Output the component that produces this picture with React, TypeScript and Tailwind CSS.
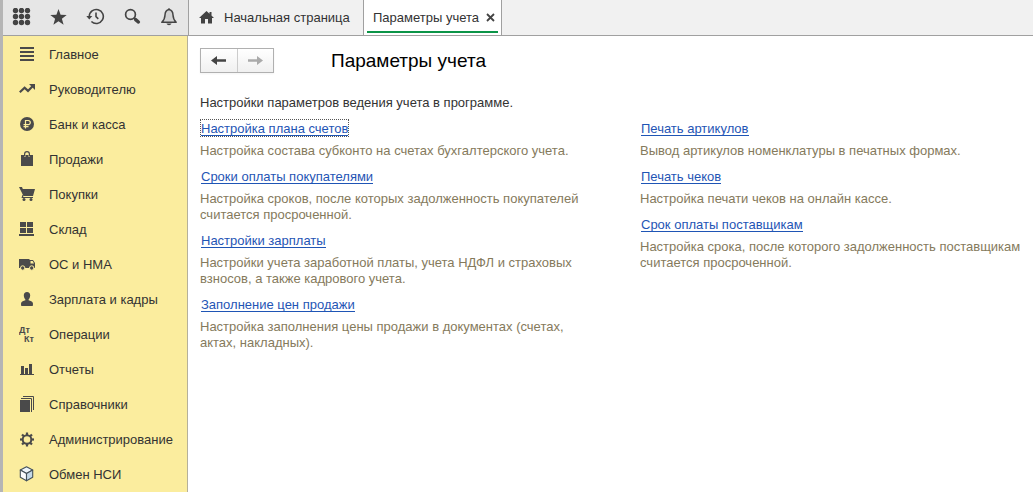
import React from "react";

interface IconProps {
  children: React.ReactNode;
  size?: number;
}

const Icon = ({ children, size = 17 }: IconProps) => (
  <svg
    width={size}
    height={size}
    viewBox={`0 0 ${size} ${size}`}
    fill="currentColor"
    className="shrink-0"
    aria-hidden="true"
  >
    {children}
  </svg>
);

const tools = [
  {
    label: "Меню функций",
    icon: (
      <>
        {[3.5, 9.5, 15.5].map((x) =>
          [2.5, 8.5, 14.5].map((y) => (
            <circle key={`${x}-${y}`} cx={x} cy={y} r="2.7" />
          ))
        )}
      </>
    ),
  },
  {
    label: "Избранное",
    icon: (
      <path d="M9.5 1l2.1 5.8 6.1.2-4.8 3.8 1.7 5.9-5.1-3.4-5.1 3.4 1.7-5.9L1.3 7l6.1-.2z" />
    ),
  },
  {
    label: "История",
    icon: (
      <>
        <path
          d="M3.3 8.5a7 7 0 1 1 2.1 5"
          fill="none"
          stroke="currentColor"
          strokeWidth="1.6"
        />
        <path d="M.3 8h6L3.3 11.6z" />
        <path
          d="M10 4.5v4.2l2.3 2.1"
          fill="none"
          stroke="currentColor"
          strokeWidth="1.6"
        />
      </>
    ),
  },
  {
    label: "Поиск",
    icon: (
      <>
        <circle
          cx="7.5"
          cy="6.5"
          r="4.9"
          fill="none"
          stroke="currentColor"
          strokeWidth="1.7"
        />
        <path d="M11 9.5l2 2" stroke="currentColor" strokeWidth="1.6" />
        <path
          d="M12.6 11.6l2.8 2.4"
          stroke="currentColor"
          strokeWidth="3.4"
          strokeLinecap="round"
        />
      </>
    ),
  },
  {
    label: "Уведомления",
    icon: (
      <>
        <path
          d="M9 1.5c-3 .6-3.9 2.9-4 5.5-.1 3.2-1 5.3-3.2 7.2h14.4C14 12.3 13.1 10.2 13 7c-.1-2.6-1-4.9-4-5.5z"
          fill="#d2d2d2"
          stroke="currentColor"
          strokeWidth="1.5"
          strokeLinejoin="round"
        />
        <path d="M8 .4h2v1.5H8zM6.5 15.5h5c-.5 1.2-1.4 1.7-2.5 1.7s-2-.5-2.5-1.7z" />
      </>
    ),
  },
];

const sections = [
  {
    title: "Главное",
    icon: <path d="M1 1h14v2H1zM1 5h14v2H1zM1 9h14v2H1zM1 13h14v2H1z" />,
  },
  {
    title: "Руководителю",
    icon: (
      <>
        <path
          d="M.8 11.3l4.8-4.6L9 9.9 13.8 5"
          fill="none"
          stroke="currentColor"
          strokeWidth="2.2"
        />
        <path d="M10 3h6v6z" />
      </>
    ),
  },
  {
    title: "Банк и касса",
    icon: (
      <>
        <circle cx="8" cy="8" r="7" />
        <path
          d="M6.5 12.5v-8h2.7a2.1 2.1 0 0 1 0 4.2H4.5M4.5 10.7h5"
          fill="none"
          stroke="#fbed9e"
          strokeWidth="1.2"
        />
      </>
    ),
  },
  {
    title: "Продажи",
    icon: (
      <>
        <path d="M2 4h3v2h1.5V4h3v2H11V4h3v11H2z" />
        <path
          d="M5.6 5.5V3a2.4 2.4 0 0 1 4.8 0v2.5"
          fill="none"
          stroke="currentColor"
          strokeWidth="1.2"
        />
      </>
    ),
  },
  {
    title: "Покупки",
    icon: (
      <>
        <path d="M0 1h3l.8 2H16l-2 7H4.5z" />
        <path
          d="M4 9l-.7 2.5H14"
          fill="none"
          stroke="currentColor"
          strokeWidth="1.2"
        />
        <circle cx="5" cy="13.5" r="1.5" />
        <circle cx="12" cy="13.5" r="1.5" />
      </>
    ),
  },
  {
    title: "Склад",
    icon: (
      <path d="M1 1h6v5H1zM8 1h6v5H8zM1 7h6v5H1zM8 7h6v5H8zM0 13h15v2H0z" />
    ),
  },
  {
    title: "ОС и НМА",
    icon: (
      <>
        <path d="M0 3h10.5v1H14l2 3v5H0z" />
        <path d="M11.5 5h2.2L15 7.5h-3.5z" fill="#fbed9e" />
        <circle cx="3.7" cy="12" r="2.2" stroke="#fbed9e" strokeWidth="1" />
        <circle cx="12.7" cy="12" r="2.2" stroke="#fbed9e" strokeWidth="1" />
      </>
    ),
  },
  {
    title: "Зарплата и кадры",
    icon: (
      <path d="M8 1c2 0 3.3 1.3 3.2 3.4C11.1 6.5 10 8 9.6 8.5v.8c1.9.6 3.9 1 4.3 2.7.2.9.1 2-.2 3H2.3c-.3-1-.4-2.1-.2-3 .4-1.7 2.4-2.1 4.3-2.7v-.8C6 8 4.9 6.500 4.8 4.4 4.7 2.3 6 1 8 1z" />
    ),
  },
  {
    title: "Операции",
    icon: (
      <g fontSize="9" fontWeight="700">
        <text x="0" y="7">
          Дт
        </text>
        <text x="5" y="16">
          Кт
        </text>
      </g>
    ),
  },
  {
    title: "Отчеты",
    icon: <path d="M2 5h3v8H2zM6 7h3v6H6zM10 3h3v10h-3zM1 13h14v1H1z" />,
  },
  {
    title: "Справочники",
    icon: (
      <>
        <path d="M1 4h10v12H1z" />
        <path
          d="M2 2.5h10.500V16M4 .5h10.500V14"
          fill="none"
          stroke="currentColor"
          strokeWidth="1"
        />
      </>
    ),
  },
  {
    title: "Администрирование",
    icon: (
      <>
        <circle
          cx="8"
          cy="8.5"
          r="4.3"
          fill="none"
          stroke="currentColor"
          strokeWidth="2"
        />
        {[0, 45, 90, 135, 180, 225, 270, 315].map((angle) => (
          <path
            key={angle}
            d="M6.9 1.500h2.200v2.500H6.900z"
            transform={`rotate(${angle} 8 8.5)`}
          />
        ))}
      </>
    ),
  },
  {
    title: "Обмен НСИ",
    icon: (
      <g stroke="#44525c" strokeWidth="1.1" strokeLinejoin="round">
        <path d="M7.500.8l6.200 3.300-6.200 3.400-6.200-3.400z" fill="#eef5fa" />
        <path d="M1.300 4.100l6.200 3.400v7.300l-6.200-3.600z" fill="#fbfdff" />
        <path d="M13.700 4.100L7.500 7.500v7.300l6.200-3.600z" fill="#c4d9e8" />
      </g>
    ),
  },
];

const leftSettings = [
  {
    title: "Настройка плана счетов",
    text: "Настройка состава субконто на счетах бухгалтерского учета.",
    focused: true,
  },
  {
    title: "Сроки оплаты покупателями",
    text: "Настройка сроков, после которых задолженность покупателей считается просроченной.",
  },
  {
    title: "Настройки зарплаты",
    text: "Настройки учета заработной платы, учета НДФЛ и страховых взносов, а также кадрового учета.",
  },
  {
    title: "Заполнение цен продажи",
    text: "Настройка заполнения цены продажи в документах (счетах, актах, накладных).",
  },
];

const rightSettings = [
  {
    title: "Печать артикулов",
    text: "Вывод артикулов номенклатуры в печатных формах.",
  },
  {
    title: "Печать чеков",
    text: "Настройка печати чеков на онлайн кассе.",
  },
  {
    title: "Срок оплаты поставщикам",
    text: "Настройка срока, после которого задолженность поставщикам считается просроченной.",
  },
];

interface SettingsColumnProps {
  items: { title: string; text: string; focused?: boolean }[];
}

const SettingsColumn = ({ items }: SettingsColumnProps) => (
  <div className="flex flex-col gap-2">
    {items.map((item) => (
      <div key={item.title} className="flex flex-col items-start gap-1.5">
        <a
          href="#"
          className={
            item.focused
              ? "border border-dotted border-[#555555] text-[#1f55b5]"
              : "border border-transparent text-[#1f55b5]"
          }
        >
          <span className="block h-4 border-b border-[#1f55b5] leading-[17px]">
            {item.title}
          </span>
        </a>
        <p className="leading-4 text-[#857a5c]">{item.text}</p>
      </div>
    ))}
  </div>
);

const Sidebar = () => (
  <aside className="w-[188px] shrink-0 flex flex-col border-l-3 border-l-[#b5b5b5] bg-[#fbed9e]">
    <div className="h-9 shrink-0 flex border-b border-[#a0a0a0] bg-[#e6e6e6]">
      {tools.map((tool) => (
        <button
          key={tool.label}
          type="button"
          aria-label={tool.label}
          className="w-[37px] flex items-center justify-center text-[#444444]"
        >
          <Icon size={19}>{tool.icon}</Icon>
        </button>
      ))}
    </div>
    <nav className="grow flex flex-col border-r border-[#b5b09a] pt-px">
      {sections.map((section) => (
        <a
          key={section.title}
          href="#"
          className="h-[35px] flex items-center gap-[13px] pl-4 text-[#333333]"
        >
          <span className="text-[#4a4a4a]">
            <Icon>{section.icon}</Icon>
          </span>
          {section.title}
        </a>
      ))}
    </nav>
  </aside>
);

const Tabs = () => (
  <div className="h-9 shrink-0 flex border-b border-[#a0a0a0] bg-[#f1f1f1] text-[#333333]">
    <button
      type="button"
      className="w-[176px] flex items-center gap-2 border-x border-[#a0a0a0] pl-2.5"
    >
      <span className="text-[#444444]">
        <Icon>
          <path d="M7.5 2L0 9h2v5.5h4V10h3v4.5h4V9h2l-2.500-2.400V3h-2v1.700z" />
        </Icon>
      </span>
      Начальная страница
    </button>
    <div className="w-[138px] flex flex-col border-r border-[#a0a0a0] bg-white px-[3px] pb-0.5">
      <div className="grow flex items-center justify-between border-b-2 border-[#0b9447] pl-1.5 pr-[3px] pt-1">
        <button type="button">Параметры учета</button>
        <button type="button" aria-label="Закрыть" className="text-[#444444]">
          <Icon size={9}>
            <path
              d="M1 1l7 7M8 1L1 8"
              stroke="currentColor"
              strokeWidth="1.8"
            />
          </Icon>
        </button>
      </div>
    </div>
  </div>
);

const HistoryButtons = () => (
  <div className="w-[74px] h-[25px] flex border border-[#b0b0b0] bg-linear-to-b from-white to-[#f0f0f0] shadow-xs">
    <button
      type="button"
      aria-label="Назад"
      className="grow flex items-center justify-center border-r border-[#cccccc] text-[#444444]"
    >
      <Icon size={15}>
        <path d="M0 7.500L6 3v3.200h9v2.600H6V12z" />
      </Icon>
    </button>
    <button
      type="button"
      aria-label="Вперед"
      className="grow flex items-center justify-center text-[#aaaaaa]"
    >
      <Icon size={15}>
        <path d="M15 7.500L9 3v3.200H0v2.600h9V12z" />
      </Icon>
    </button>
  </div>
);

const App = () => {
  return (
    <div className="min-h-screen flex bg-white font-['Liberation_Sans',Arial,sans-serif] text-[13px]">
      <Sidebar />
      <div className="grow min-w-0 flex flex-col">
        <Tabs />
        <main className="pl-3 pr-[9px] pt-3">
          <div className="flex items-center gap-[57px]">
            <HistoryButtons />
            <h1 className="text-[19px] leading-6 text-black">
              Параметры учета
            </h1>
          </div>
          <p className="pt-[22px] leading-4 text-[#333333]">
            Настройки параметров ведения учета в программе.
          </p>
          <div className="grid grid-cols-2 gap-14 pt-2">
            <SettingsColumn items={leftSettings} />
            <SettingsColumn items={rightSettings} />
          </div>
        </main>
      </div>
    </div>
  );
};

export default App;
